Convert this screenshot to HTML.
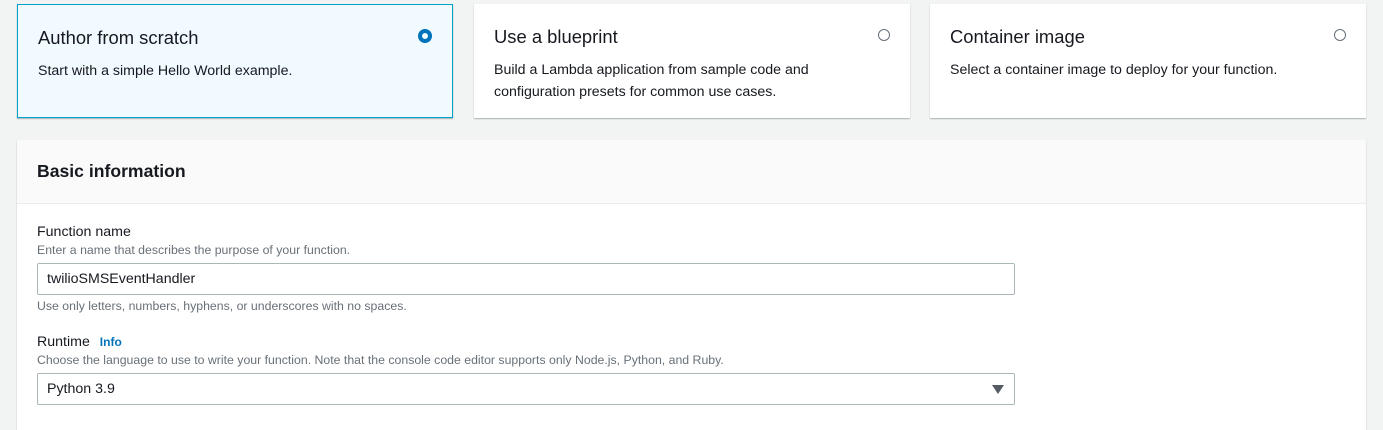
<!DOCTYPE html>
<html><head><style>
body{margin:0;width:1383px;height:417px;background:#f2f3f3;font-family:"Liberation Sans",sans-serif;color:#16191f;position:relative;overflow:hidden}
.card{position:absolute;top:4px;height:114px;width:436px;background:#fff;box-shadow:0 1px 1px rgba(0,28,36,.3);box-sizing:border-box}
.card.sel{background:#f1faff;border:1px solid #00a1c9}
.t{position:absolute;left:20px;top:22px;font-size:18.4px}
.d{position:absolute;left:20px;top:55px;font-size:14.2px;line-height:22px}
.r{position:absolute;right:20px;top:25px;width:12px;height:12px;border:1px solid #687078;border-radius:50%;box-sizing:border-box}
.sel .r{border:4px solid #0073bb;width:14px;height:14px;right:20px;top:24px}
.panel{position:absolute;left:17px;top:140px;width:1349px;height:290px;background:#fff;box-shadow:0 1px 1px rgba(0,28,36,.3)}
.hd{height:64px;background:#fafafa;border-bottom:1px solid #eaeded;box-sizing:border-box}
.hd div{position:absolute;left:20px;top:21px;font-size:17.6px;font-weight:bold}
.lbl{position:absolute;left:20px;font-size:14.2px}
.sm{position:absolute;left:20px;font-size:12.3px;color:#687078}
.in{position:absolute;left:20px;width:978px;height:32px;border:1px solid #aab7b8;border-radius:2px;box-sizing:border-box;font-size:14.2px;padding:7px 9px}
</style></head><body>
<div class="card sel" style="left:17px"><div class="t">Author from scratch</div><div class="d">Start with a simple Hello World example.</div><div class="r"></div></div>
<div class="card" style="left:474px"><div class="t">Use a blueprint</div><div class="d">Build a Lambda application from sample code and<br>configuration presets for common use cases.</div><div class="r"></div></div>
<div class="card" style="left:930px"><div class="t">Container image</div><div class="d">Select a container image to deploy for your function.</div><div class="r"></div></div>
<div class="panel">
<div class="hd"><div>Basic information</div></div>
<div class="lbl" style="top:84px">Function name</div>
<div class="sm" style="top:103px">Enter a name that describes the purpose of your function.</div>
<div class="in" style="top:123px">twilioSMSEventHandler</div>
<div class="sm" style="top:159px">Use only letters, numbers, hyphens, or underscores with no spaces.</div>
<div class="lbl" style="top:194px">Runtime <span style="color:#0073bb;font-weight:bold;font-size:12px;margin-left:6px">Info</span></div>
<div class="sm" style="top:213px">Choose the language to use to write your function. Note that the console code editor supports only Node.js, Python, and Ruby.</div>
<div class="in" style="top:233px">Python 3.9<svg style="position:absolute;right:10px;top:11px" width="12" height="9"><path d="M0 0H12L6 9Z" fill="#545b64"/></svg></div>
</div>
</body></html>
